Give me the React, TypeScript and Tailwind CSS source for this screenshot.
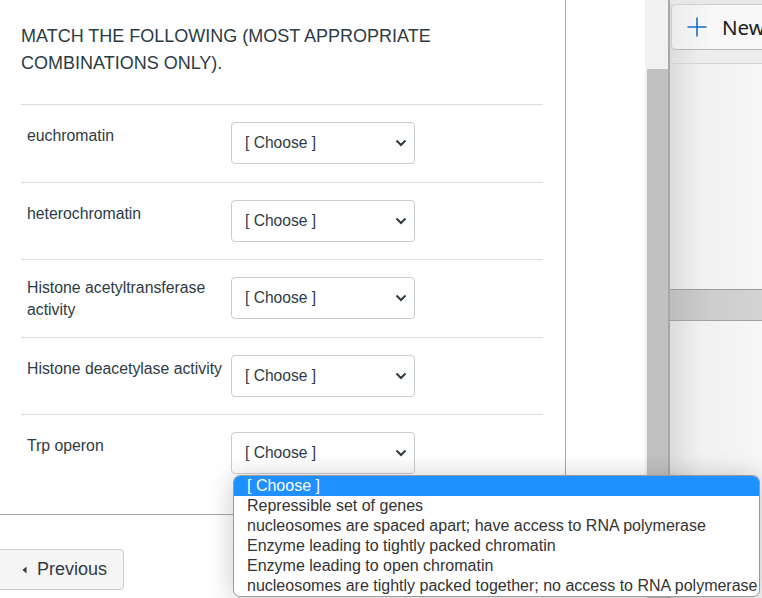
import React from "react";

const rows: { label: string; pt: string }[] = [
  { label: "euchromatin", pt: "pt-[3px]" },
  { label: "heterochromatin", pt: "pt-[3px]" },
  { label: "Histone acetyltransferase activity", pt: "pt-0 -mb-[2px]" },
  { label: "Histone deacetylase activity", pt: "pt-[3px]" },
  { label: "Trp operon", pt: "pt-[3px]" },
];

const options = [
  "[ Choose ]",
  "Repressible set of genes",
  "nucleosomes are spaced apart; have access to RNA polymerase",
  "Enzyme leading to tightly packed chromatin",
  "Enzyme leading to open chromatin",
  "nucleosomes are tightly packed together; no access to RNA polymerase",
];

function Select() {
  return (
    <div className="w-[184px] h-[42px] shrink-0 border border-[#c7cdd1] rounded-[4px] bg-white flex items-center justify-between pl-[13px] pr-[7px]">
      <span className="text-[15.6px] text-[#2d3b45]">[ Choose ]</span>
      <svg width="12" height="8" viewBox="0 0 12 8">
        <path d="M1.5 1.5 L6 6 L10.5 1.5" fill="none" stroke="#2d3b45" strokeWidth="2" />
      </svg>
    </div>
  );
}

export default function App() {
  return (
    <div
      className="relative w-[762px] h-[598px] overflow-hidden bg-white flex"
      style={{ fontFamily: '"Liberation Sans", Arial, sans-serif' }}
    >
      {/* main content */}
      <div className="w-[645px] shrink-0 flex flex-col">
        <div className="w-[566px] border-r border-b border-[#a9a9a9] pl-[21px] pr-[22px] pt-[23px] pb-[22.5px]">
          <div className="text-[18px] leading-[27px] text-[#2d3b45] mb-[27px]">
            MATCH THE FOLLOWING (MOST APPROPRIATE
            <br />
            COMBINATIONS ONLY).
          </div>
          {rows.map((r) => (
            <div key={r.label} className="border-t border-[#dddddd] pt-[17px] pb-[17.5px] flex items-start">
              <div className={`w-[210px] shrink-0 pl-[6px] pr-[4px] text-[15.8px] leading-[22px] text-[#2d3b45] ${r.pt}`}>
                {r.label}
              </div>
              <Select />
            </div>
          ))}
        </div>
        <div className="mt-[34px] ml-[-5px] w-[129px] h-[41px] border border-[#c7cdd1] rounded-[4px] bg-[#f5f5f5] flex items-center pl-[26px]">
          <svg width="5" height="8" viewBox="0 0 5 8">
            <path d="M4.5 0.5 L0.5 4 L4.5 7.5 Z" fill="#2d3b45" />
          </svg>
          <span className="ml-[10px] text-[18px] text-[#2d3b45]">Previous</span>
        </div>
      </div>

      {/* scrollbar */}
      <div className="w-[23px] shrink-0 bg-[#f1f1f1] flex flex-col pl-[2px] pt-[69px]">
        <div className="flex-1 bg-[#c1c1c1]" />
      </div>
      <div className="w-[2px] shrink-0 bg-[#a8a8a8]" />

      {/* right panel */}
      <div className="flex-1 flex flex-col bg-[linear-gradient(to_right,#dcdcdc,#f1f1f1_30px,#f7f7f7)]">
        <div className="h-[4px] bg-[#e8e8e8]" />
        <div
          className="h-[46px] ml-[1px] border border-[#cfcfcf] border-b-[#b5b5b5] border-r-0 rounded-l-[5px] bg-[linear-gradient(to_right,#ececec,#f8f8f8_40px)] flex items-center pl-[15px]"
          style={{ fontFamily: '"Noto Sans", "Open Sans", sans-serif' }}
        >
          <svg width="20" height="20" viewBox="0 0 20 20">
            <path d="M10 0.5 V19.5 M0.5 10 H19.5" stroke="#1a6dc4" strokeWidth="1.6" fill="none" />
          </svg>
          <span className="ml-[15px] text-[20.5px] text-[#1b1b1b] leading-none whitespace-nowrap">New</span>
        </div>
        <div className="h-[14px] bg-[linear-gradient(to_right,#dedede,#ededed_30px)] border-b border-[#d4d4d4]" />
        <div className="h-[225px]" />
        <div className="h-[32px] border-t border-b border-t-[#9a9a9a] border-b-[#9ea3aa] bg-[linear-gradient(to_right,#bdbdbd,#cdcdcd_40px,#d4d4d4)]" />
        <div className="flex-1" />
      </div>

      {/* dropdown popup */}
      <div className="absolute left-[233px] top-[475px] w-[527px] border border-[#9a9a9a] rounded-[7px] bg-white overflow-hidden shadow-[0_2px_26px_rgba(0,0,0,0.22)]">
        {options.map((o, i) => (
          <div
            key={o}
            className={`h-[20px] leading-[20px] pl-[13px] text-[16px] whitespace-nowrap ${
              i === 0 ? "bg-[#1e90ff] text-white" : "text-[#333333]"
            }`}
          >
            {o}
          </div>
        ))}
      </div>
    </div>
  );
}
